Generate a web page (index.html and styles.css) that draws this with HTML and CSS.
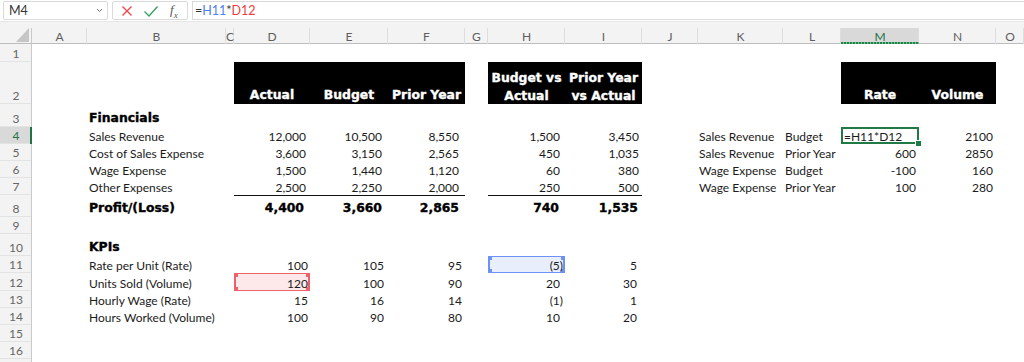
FILE: index.html
```html
<!DOCTYPE html>
<html lang="en">
<head>
<meta charset="utf-8">
<title>Variance analysis</title>
<link rel="stylesheet" href="styles.css">
</head>
<body>
<div class="topbar">
  <div class="namebox"><span>M4</span><svg width="7" height="5" viewBox="0 0 7 5"><path d="M1 1l2.5 2.5L6 1" stroke="#777" stroke-width="1" fill="none"/></svg></div>
  <div class="fxbox">
    <svg width="12" height="12" viewBox="0 0 12 12"><path d="M1.5 1.5l9 9M10.5 1.5l-9 9" stroke="#e5484d" stroke-width="1.4" fill="none"/></svg>
    <svg width="16" height="12" viewBox="0 0 16 12"><path d="M1.5 6.5l4.5 4.5 8.5-9.5" stroke="#3aa264" stroke-width="1.4" fill="none"/></svg>
    <span class="fx"><i>f</i><sub>x</sub></span>
  </div>
  <div class="formula">=<span class="ref-h">H11</span>*<span class="ref-d">D12</span></div>
</div>
<div class="strip"></div>
<table class="sheet">
  <colgroup>
    <col class="w-rh"><col class="w-a"><col class="w-b"><col class="w-c"><col class="w-d"><col class="w-e"><col class="w-f"><col class="w-g"><col class="w-h"><col class="w-i"><col class="w-j"><col class="w-k"><col class="w-l"><col class="w-m"><col class="w-n"><col class="w-o">
  </colgroup>
  <thead>
    <tr class="r-head">
      <th class="corner"><svg width="14" height="15" viewBox="0 0 14 15"><polygon points="13,0 13,14 0,14" fill="#c6c6c6"/></svg></th>
      <th class="ch">A</th><th class="ch">B</th><th class="ch">C</th><th class="ch">D</th><th class="ch">E</th><th class="ch">F</th><th class="ch">G</th><th class="ch">H</th><th class="ch">I</th><th class="ch">J</th><th class="ch">K</th><th class="ch">L</th><th class="ch active">M</th><th class="ch">N</th><th class="ch">O</th>
    </tr>
  </thead>
  <tbody>
    <tr class="r18"><th class="rh">1</th><td colspan="15"></td></tr>
    <tr class="r42"><th class="rh">2</th><td colspan="3"></td><td class="hd">Actual</td><td class="hd">Budget</td><td class="hd">Prior Year</td><td></td><td class="hd"><div class="hd2">Budget vs<br>Actual</div></td><td class="hd"><div class="hd2">Prior Year<br>vs Actual</div></td><td colspan="3"></td><td class="hd">Rate</td><td class="hd">Volume</td><td></td></tr>
    <tr class="r23"><th class="rh">3</th><td></td><td class="lbl bold">Financials</td><td colspan="13"></td></tr>
    <tr class="r17"><th class="rh active">4</th><td></td><td class="lbl">Sales Revenue</td><td></td><td class="num p4">12,000</td><td class="num p6">10,500</td><td class="num p6">8,550</td><td></td><td class="num p5">1,500</td><td class="num p3">3,450</td><td></td><td class="lbl k">Sales Revenue</td><td class="lbl">Budget</td><td class="sel-green">=H11*D12</td><td class="num p3">2100</td><td></td></tr>
    <tr class="r17"><th class="rh">5</th><td></td><td class="lbl">Cost of Sales Expense</td><td></td><td class="num p4">3,600</td><td class="num p6">3,150</td><td class="num p6">2,565</td><td></td><td class="num p5">450</td><td class="num p3">1,035</td><td></td><td class="lbl k">Sales Revenue</td><td class="lbl">Prior Year</td><td class="num p3">600</td><td class="num p3">2850</td><td></td></tr>
    <tr class="r17"><th class="rh">6</th><td></td><td class="lbl">Wage Expense</td><td></td><td class="num p4">1,500</td><td class="num p6">1,440</td><td class="num p6">1,120</td><td></td><td class="num p5">60</td><td class="num p3">380</td><td></td><td class="lbl k">Wage Expense</td><td class="lbl">Budget</td><td class="num p3">-100</td><td class="num p3">160</td><td></td></tr>
    <tr class="r17"><th class="rh">7</th><td></td><td class="lbl">Other Expenses</td><td></td><td class="num p4">2,500</td><td class="num p6">2,250</td><td class="num p6">2,000</td><td></td><td class="num p5">250</td><td class="num p3">500</td><td></td><td class="lbl k">Wage Expense</td><td class="lbl">Prior Year</td><td class="num p3">100</td><td class="num p3">280</td><td></td></tr>
    <tr class="r22"><th class="rh">8</th><td></td><td class="lbl bold">Profit/(Loss)</td><td></td><td class="num p6 bold ol">4,400</td><td class="num p6 bold ol">3,660</td><td class="num p6 bold ol">2,865</td><td></td><td class="num p6 bold ol">740</td><td class="num p4 bold ol">1,535</td><td colspan="6"></td></tr>
    <tr class="r17"><th class="rh">9</th><td colspan="15"></td></tr>
    <tr class="r22"><th class="rh">10</th><td></td><td class="lbl bold">KPIs</td><td colspan="13"></td></tr>
    <tr class="r17"><th class="rh">11</th><td></td><td class="lbl">Rate per Unit (Rate)</td><td></td><td class="num p2">100</td><td class="num p4">105</td><td class="num p3">95</td><td></td><td class="num p2 sel-blue">(5)</td><td class="num p5">5</td><td colspan="6"></td></tr>
    <tr class="r18"><th class="rh">12</th><td></td><td class="lbl">Units Sold (Volume)</td><td></td><td class="num p2 sel-red">120</td><td class="num p4">100</td><td class="num p3">90</td><td></td><td class="num p5">20</td><td class="num p5">30</td><td colspan="6"></td></tr>
    <tr class="r17"><th class="rh">13</th><td></td><td class="lbl">Hourly Wage (Rate)</td><td></td><td class="num p2">15</td><td class="num p4">16</td><td class="num p3">14</td><td></td><td class="num p2">(1)</td><td class="num p5">1</td><td colspan="6"></td></tr>
    <tr class="r17"><th class="rh">14</th><td></td><td class="lbl">Hours Worked (Volume)</td><td></td><td class="num p2">100</td><td class="num p4">90</td><td class="num p3">80</td><td></td><td class="num p5">10</td><td class="num p5">20</td><td colspan="6"></td></tr>
    <tr class="r17"><th class="rh">15</th><td colspan="15"></td></tr>
    <tr class="r17"><th class="rh">16</th><td colspan="15"></td></tr>
    <tr class="r17"><th class="rh"></th><td colspan="15"></td></tr>
  </tbody>
</table>
</body>
</html>
```
FILE: styles.css
```css
* { box-sizing: border-box; }
html, body { margin: 0; padding: 0; background: #fff; }
body {
  width: 1024px;
  height: 362px;
  overflow: hidden;
  font-family: Lato, "Liberation Sans", sans-serif;
  color: #1b1b1b;
}

/* formula bar */
.topbar {
  height: 22px;
  display: flex;
  align-items: center;
  gap: 4px;
  padding-left: 3px;
  border-bottom: 1px solid #e6e6e6;
  background: #fff;
}
.namebox {
  width: 105px;
  height: 19px;
  border: 1px solid #dadada;
  border-radius: 2px;
  display: flex;
  align-items: center;
  justify-content: space-between;
  padding: 0 4px 0 5px;
  font-size: 12.5px;
  color: #333;
}
.fxbox {
  width: 76px;
  height: 19px;
  border: 1px solid #dadada;
  border-radius: 2px;
  display: flex;
  align-items: center;
  gap: 10px;
  padding-left: 8px;
}
.fx {
  margin-left: 1px;
  font-family: "Liberation Serif", serif;
  font-size: 13px;
  color: #555;
}
.fx sub { font-size: 9px; font-style: italic; }
.formula {
  flex: 1;
  height: 19px;
  border: 1px solid #dadada;
  border-right: none;
  padding-left: 2px;
  font-size: 12.5px;
  line-height: 17px;
  color: #333;
}
.ref-h { color: #4d7ef5; }
.ref-d { color: #ec4040; }

.strip { height: 6px; background: #f3f3f3; }

/* sheet */
.sheet {
  border-collapse: collapse;
  table-layout: fixed;
  width: 1024px;
  font-size: 12px;
}
.w-rh { width: 32px; }
.w-a { width: 55px; }
.w-b { width: 139px; }
.w-c { width: 8px; }
.w-d { width: 76px; }
.w-e { width: 78px; }
.w-f { width: 77px; }
.w-g { width: 23px; }
.w-h { width: 77px; }
.w-i { width: 77px; }
.w-j { width: 56px; }
.w-k { width: 85px; }
.w-l { width: 58px; }
.w-m { width: 78px; }
.w-n { width: 77px; }
.w-o { width: 28px; }

.sheet th, .sheet td {
  padding: 0;
  white-space: nowrap;
  vertical-align: bottom;
  line-height: 15px;
  font-weight: normal;
}
.r-head { height: 16px; }
.r17 { height: 17px; }
.r18 { height: 18px; }
.r22 { height: 22px; }
.r23 { height: 23px; }
.r42 { height: 42px; }

.sheet .corner {
  background: #f3f3f3;
  text-align: right;
  padding: 0 2px 1px 0;
  box-shadow: inset -1px 0 #c9c9c9, inset 0 -1px #bdbdbd;
}
.corner svg { display: block; margin-left: auto; }
.sheet .ch {
  background: #f3f3f3;
  color: #5e5e5e;
  text-align: center;
  vertical-align: middle;
  box-shadow: inset -1px 0 #dedede, inset 0 -1px #bdbdbd;
}
.sheet .ch.active {
  position: relative;
  background: #d9d9d9;
  color: #217346;
}
.ch.active::after {
  content: "";
  position: absolute;
  left: 0;
  right: 0;
  bottom: 0;
  height: 2px;
  background: repeating-linear-gradient(90deg, #1d8148 0 2px, #7bbf95 2px 3px);
}
.sheet .rh {
  background: #f3f3f3;
  color: #666;
  text-align: center;
  padding-bottom: 1px;
  box-shadow: inset -1px 0 #c9c9c9, inset 0 -1px #e3e3e3;
}
.sheet .rh.active {
  background: #d9d9d9;
  color: #217346;
  box-shadow: inset -2px 0 #217346, inset 0 -1px #e3e3e3;
}

.sheet .lbl { padding-left: 2px; }
.sheet .lbl.k { padding-left: 1px; }
.sheet .num { text-align: right; }
.sheet .p2 { padding-right: 2px; }
.sheet .p3 { padding-right: 3px; }
.sheet .p4 { padding-right: 4px; }
.sheet .p5 { padding-right: 5px; }
.sheet .p6 { padding-right: 6px; }
.sheet .p7 { padding-right: 7px; }

.sheet .bold {
  font-family: "DejaVu Sans", sans-serif;
  font-weight: bold;
  font-size: 12.4px;
  color: #000;
  padding-bottom: 2px;
  -webkit-text-stroke: 0.35px currentColor;
}

.sheet .hd {
  background: #000;
  color: #fff;
  text-align: center;
  font-family: "DejaVu Sans", sans-serif;
  font-weight: bold;
  font-size: 12.4px;
  line-height: 18px;
  -webkit-text-stroke: 0.35px currentColor;
}
.hd2 { margin-bottom: -1px; }

.sheet .ol { box-shadow: inset 0 1px #111; }

.sheet .sel-green {
  position: relative;
  padding-left: 3px;
  box-shadow: inset 0 0 0 2px #1f7a45;
}
.sel-green::after {
  content: "";
  position: absolute;
  right: -3px;
  bottom: -3px;
  width: 5px;
  height: 5px;
  background: #1f7a45;
  border: 1px solid #fff;
}
.sheet .sel-red {
  background:
    linear-gradient(#f0606a, #f0606a) left top / 4px 4px no-repeat,
    linear-gradient(#f0606a, #f0606a) right top / 4px 4px no-repeat,
    linear-gradient(#f0606a, #f0606a) left bottom / 4px 4px no-repeat,
    linear-gradient(#f0606a, #f0606a) right bottom / 4px 4px no-repeat,
    #fde9ea;
  box-shadow: inset 2px 0 #f0606a, inset -2px 0 #f0606a, inset 0 1px #f0606a, inset 0 -1px #f0606a;
}
.sheet .sel-blue {
  background:
    linear-gradient(#6d92f3, #6d92f3) left top / 4px 4px no-repeat,
    linear-gradient(#6d92f3, #6d92f3) right top / 4px 4px no-repeat,
    linear-gradient(#6d92f3, #6d92f3) left bottom / 4px 4px no-repeat,
    linear-gradient(#6d92f3, #6d92f3) right bottom / 4px 4px no-repeat,
    #e9eefc;
  box-shadow: inset 2px 0 #6d92f3, inset -2px 0 #6d92f3, inset 0 1px #6d92f3, inset 0 -1px #6d92f3;
}
```
